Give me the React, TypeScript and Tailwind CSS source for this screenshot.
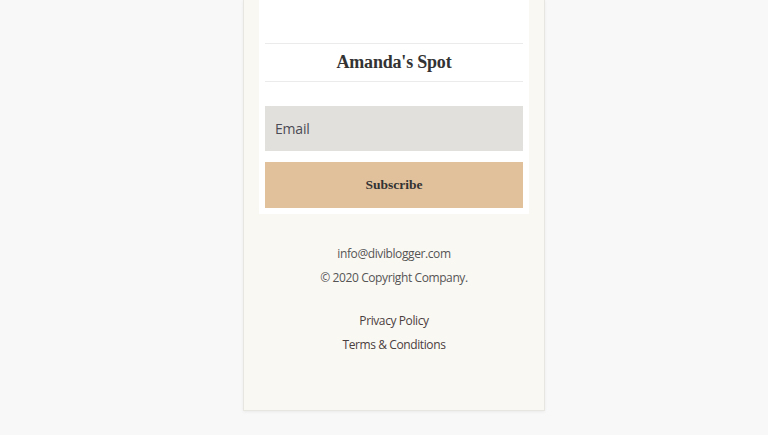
export default function App() {
  return (
    <div className="w-[768px] h-[435px] bg-[#f7f8f7] flex pl-[243px] overflow-hidden">
      <div className="w-[302px] h-[411px] bg-[#faf8f3] border border-[#e8e6e1] border-t-0 shadow-[0_1px_3px_rgba(0,0,0,0.06)] flex flex-col items-center">
        <div className="w-[270px] bg-white px-[6px] pt-[43px] pb-[6px]">
          <div className="border-y border-[#ebebeb] h-[39px] flex items-center justify-center">
            <h2 className="font-['Liberation_Serif',serif] font-bold text-[18px] tracking-[-0.2px] text-[#333333]">
              Amanda's Spot
            </h2>
          </div>
          <div className="mt-[24px] h-[45px] bg-[#e2e0dc] flex items-center px-[10px]">
            <span className="font-['Open_Sans',sans-serif] text-[14px] tracking-[-0.2px] text-[#4b4b55]">Email</span>
          </div>
          <button className="mt-[11px] w-full h-[46px] bg-[#e1c19b] flex items-center justify-center font-['Liberation_Serif',serif] font-bold text-[13.5px] text-[#333333]">
            Subscribe
          </button>
        </div>
        <div className="mt-[28px] flex flex-col items-center font-['Open_Sans',sans-serif] text-[12px] tracking-[-0.4px] text-[#555555]">
          <p className="leading-[24px]">info@diviblogger.com</p>
          <p className="leading-[24px]">&copy; 2020 Copyright Company.</p>
          <p className="leading-[24px] mt-[19px] text-[#4a4040]">Privacy Policy</p>
          <p className="leading-[24px] text-[#4a4040]">Terms &amp; Conditions</p>
        </div>
      </div>
    </div>
  );
}
